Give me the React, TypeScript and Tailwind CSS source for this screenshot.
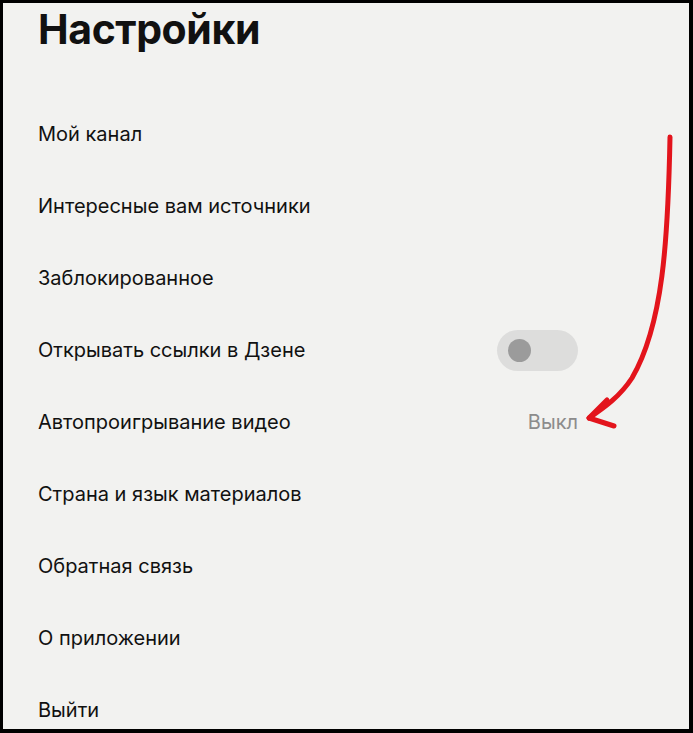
const items = [
  'Мой канал',
  'Интересные вам источники',
  'Заблокированное',
  'Открывать ссылки в Дзене',
  'Автопроигрывание видео',
  'Страна и язык материалов',
  'Обратная связь',
  'О приложении',
  'Выйти',
];

function Toggle() {
  return (
    <div className="flex h-[41px] w-[81px] items-center rounded-full bg-[#dddddc] pl-[11px]">
      <div className="h-[23px] w-[23px] rounded-full bg-[#9b9b9b]" />
    </div>
  );
}

function Row({ label }: { label: string }) {
  return (
    <div className="flex h-[72px] items-center justify-between">
      <span className="text-[20px] text-[#111]">{label}</span>
      {label === 'Открывать ссылки в Дзене' && <Toggle />}
      {label === 'Автопроигрывание видео' && <span className="text-[20px] text-[#8c8c8c]">Выкл</span>}
    </div>
  );
}

export default function App() {
  return (
    <div className="relative h-[733px] w-[693px] overflow-hidden border-t-[3px] border-l-[3px] border-r-4 border-b-4 border-black bg-[#f2f2f0] font-['Inter',sans-serif]">
      <div className="pl-[35px] pr-[111px]">
        <h1 className="pt-[1px] text-[41px] font-bold leading-[50px] tracking-[-0.4px] text-[#111]">Настройки</h1>
        <div className="mt-[44px]">
          {items.map((label) => (
            <Row key={label} label={label} />
          ))}
        </div>
      </div>

      {/* red hand-drawn arrow */}
      <svg className="pointer-events-none absolute left-[-3px] top-[-3px]" width="693" height="733" viewBox="0 0 693 733">
        <g fill="none" stroke="#e3141c" strokeWidth="5" strokeLinecap="round" strokeLinejoin="round">
          <path d="M670 137 C668 240 663 325 632 378 C619 398 602 409 589 418" />
          <path d="M607 400 L589 418 L614 426" />
        </g>
      </svg>
    </div>
  );
}
